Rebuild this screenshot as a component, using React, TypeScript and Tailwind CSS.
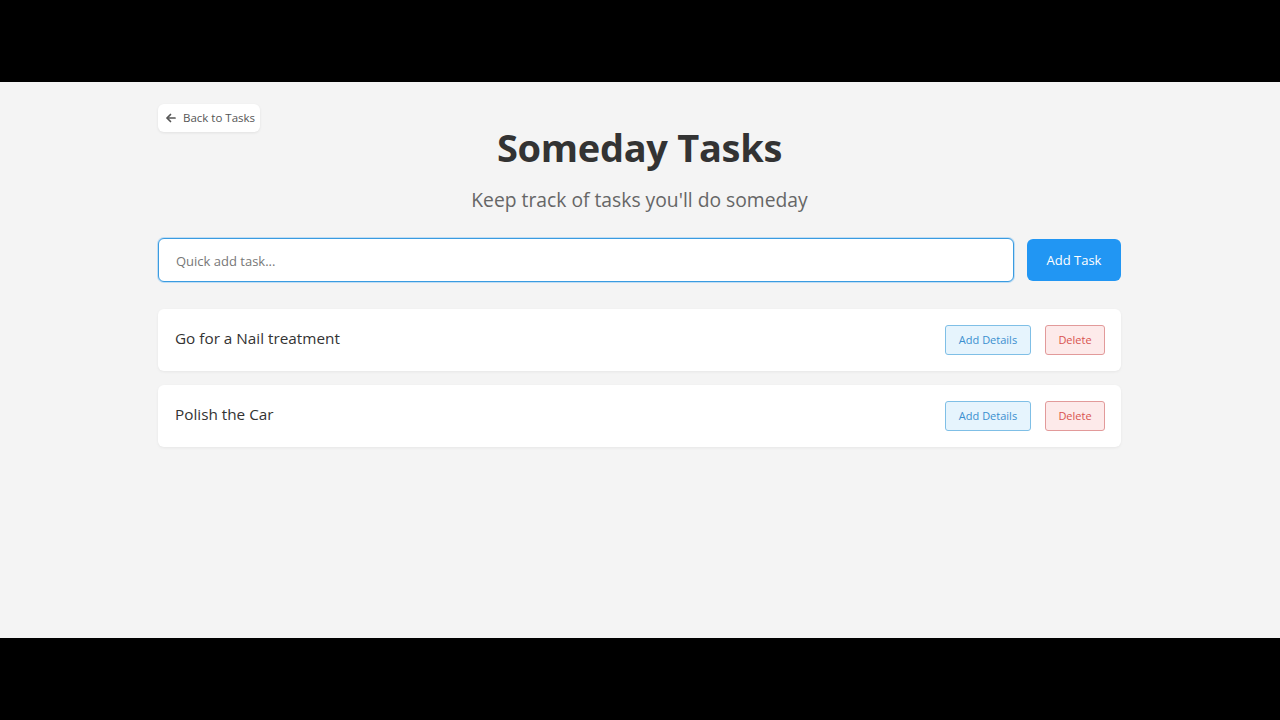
import React from "react";

const tasks = ["Go for a Nail treatment", "Polish the Car"];

export default function App() {
  return (
    <div
      className="w-[1280px] h-[720px] bg-black flex flex-col"
      style={{ fontFamily: '"Open Sans", "Noto Sans", sans-serif' }}
    >
      <div className="h-[82px] shrink-0" />
      <div className="h-[556px] bg-[#f4f4f4] shrink-0">
        <div className="w-[963px] ml-[158px] pt-[22px]">
          <div className="relative">
            <button className="absolute left-0 top-0 h-[28px] w-[102px] bg-white rounded-md shadow-[0_1px_3px_rgba(0,0,0,0.08)] flex items-center gap-[6px] pl-[7px] text-[11.5px] text-[#555]">
              <svg width="12" height="12" viewBox="0 0 24 24" fill="none" stroke="#555" strokeWidth="3.4" strokeLinecap="round" strokeLinejoin="round">
                <path d="M20 12H5" />
                <path d="M11 5l-7 7 7 7" />
              </svg>
              <span>Back to Tasks</span>
            </button>
            <h1 className="text-center text-[38px] font-bold text-[#333] leading-[48px] pt-[19px] tracking-[-0.3px]">
              Someday Tasks
            </h1>
            <p className="text-center text-[19.3px] text-[#666] mt-[16px] leading-[26px]">
              Keep track of tasks you'll do someday
            </p>
          </div>
          <div className="flex gap-[13px] mt-[25px] items-center">
            <input
              className="flex-1 h-[44px] rounded-md border border-[#3a9be0] bg-white px-[17px] pt-[2px] text-[13px] text-[#333] placeholder-[#777] outline-none shadow-[0_0_0_1px_rgba(33,150,243,0.25)]"
              placeholder="Quick add task..."
            />
            <button className="w-[94px] h-[42px] rounded-md bg-[#2196f3] text-white text-[13px] pt-[2px]">
              Add Task
            </button>
          </div>
          <div className="flex flex-col gap-[14px] mt-[27px]">
            {tasks.map((t) => (
              <div
                key={t}
                className="h-[62px] bg-white rounded-md shadow-[0_1px_3px_rgba(0,0,0,0.06)] flex items-center pl-[17px] pr-[16px]"
              >
                <span className="flex-1 text-[15.3px] text-[#333] pb-[4px]">{t}</span>
                <div className="flex gap-[14px]">
                  <button className="w-[86px] h-[30px] rounded-[3px] border border-[#7fbfe6] bg-[#e6f4fd] text-[#3a8fcf] text-[11px]">
                    Add Details
                  </button>
                  <button className="w-[60px] h-[30px] rounded-[3px] border border-[#e29a9a] bg-[#fdeaea] text-[#d9534f] text-[11px]">
                    Delete
                  </button>
                </div>
              </div>
            ))}
          </div>
        </div>
      </div>
      <div className="flex-1" />
    </div>
  );
}
